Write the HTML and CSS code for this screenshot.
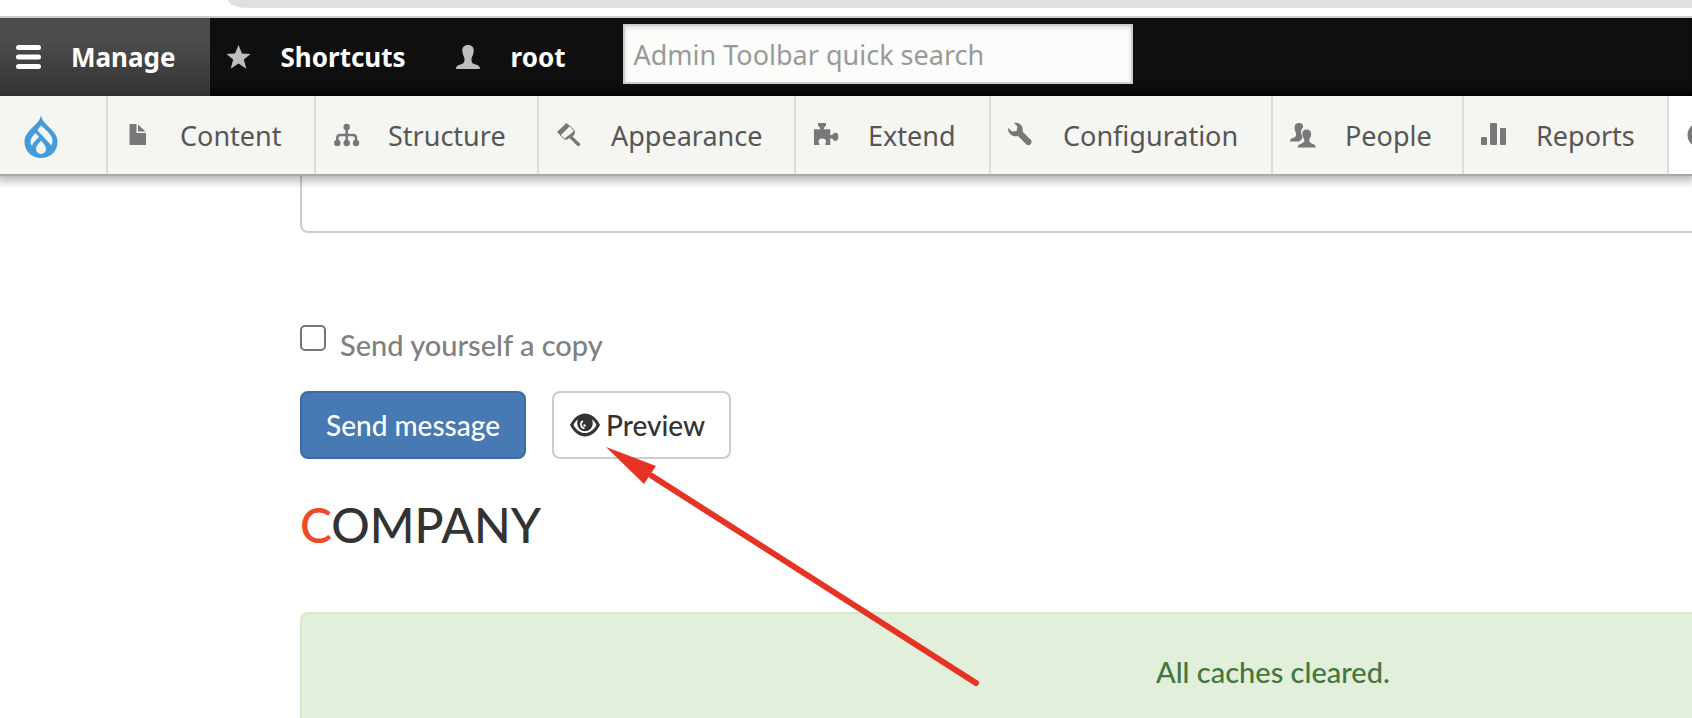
FILE: index.html
```html
<!DOCTYPE html>
<html lang="en">
<head>
<meta charset="utf-8">
<title>Contact</title>
<link rel="stylesheet" href="styles.css">
</head>
<body>
<div class="browser"><div class="address"></div></div>
<header class="toolbar">
  <nav class="bar" aria-label="Administration toolbar">
    <a class="tab active" href="#">
      <svg class="icon" viewBox="0 0 26 26"><path d="M2.500 3.500h20M2.500 13h20M2.500 22.500h20" stroke="#fff" stroke-width="5" stroke-linecap="round"/></svg>
      Manage</a>
    <a class="tab" href="#">
      <svg class="icon light" viewBox="0 0 26 26"><path d="M12.500 1l3.500 8.600 8.500.3-6.700 5.600 2.500 9.300-7.800-5.200-7.800 5.200 2.500-9.300L.5 9.900l8.500-.3z"/></svg>
      Shortcuts</a>
    <a class="tab" href="#">
      <svg class="icon light" viewBox="0 0 26 26"><path d="M12 1c4 0 6 2.500 5.700 6-.2 3-1.200 4.500-1.900 6.500-.5 2-.6 5 1.700 6.200 2.500 1 5.500 1 6.500 4.300.2.700-.2 1-1 1H1c-.8 0-1.200-.3-1-1 1-3.300 4-3.300 6.500-4.300 2.300-1.200 2.200-4.200 1.700-6.200-.7-2-1.700-3.500-1.900-6.500C6 3.500 8 1 12 1z"/></svg>
      root</a>
    <input class="search" type="text" aria-label="Search" placeholder="Admin Toolbar quick search">
  </nav>
  <nav class="tray" aria-label="Administration menu">
    <a class="item home" href="#" aria-label="Home">
      <svg class="drop" viewBox="0 0 34 43"><path fill="#459bd9" d="M17 1.500c1.500 6 5 8.500 9 12.500 5 5 7.500 8.500 7.500 14C33.500 37 26.500 44 17 44S.5 37 .5 28C.5 22.500 3 19 8 14c4-4 7.500-6.500 9-12.500z"/><g fill="#f5f5f2"><path d="M17 11.500c4 3.500 7 6 9 9 3 3.500 3 7.500 1.500 11L14 17c-.8-1 2-4.500 3-5.500z"/><path d="M11.500 19l3.500 4c-3.500 3.500-6 5.500-7 9-3-3.500-1.500-8.500 3.500-13z"/><path d="M17 26.500c2 3 5 5 5 8.500a5 5 0 0 1-10 0c0-3.500 3-5.500 5-8.500z"/></g></svg>
    </a>
    <a class="item" href="#"><svg class="icon" viewBox="0 0 26 26"><path d="M4.500 2h6v9H20v12H4.500c-.6 0-1-.4-1-1V3c0-.6.4-1 1-1zM12 2.500l7.500 7H12z"/></svg>Content</a>
    <a class="item" href="#"><svg class="icon" viewBox="0 0 26 26"><circle cx="12.700" cy="5" r="3.200"/><circle cx="3.300" cy="21" r="3.200"/><circle cx="12.700" cy="21" r="3.200"/><circle cx="22" cy="21" r="3.200"/><path d="M12.700 5v16M3.300 21v-5q0-3 3-3H19q3 0 3 3v5" fill="none" stroke="#787878" stroke-width="2.500"/></svg>Structure</a>
    <a class="item" href="#"><svg class="icon" viewBox="0 0 26 26"><path d="M9.500 1L0 10l3.500 3.500 9.500-9.500z"/><path d="M3 13l4.500 4L18 10l-5.500-6.500" fill="none" stroke="#787878"/><path d="M17.500 8.500v4l-2 2 7.500 7c1 1.500-1 3.500-2.500 2.500l-8-8-2 1.500H7z"/></svg>Appearance</a>
    <a class="item" href="#"><svg class="icon" viewBox="0 0 26 26"><path d="M0 7.300h6V5.500l-2-2V1h8v2.500l-2 2v1.800h6.300V13h2c1-2 2-2.300 3.500-2.300 2 0 2.500 2 2.500 4s-.5 4-2.500 4c-1.500 0-2.500-.3-3.500-2.300h-2V23h-5v-1.500c1.500-1.500 1-5-3-5s-4.500 3.500-3 5V23H0z"/></svg>Extend</a>
    <a class="item" href="#"><svg class="icon" viewBox="0 0 26 26"><path d="M5 1c5-1 10 3 8.500 8.500l8.500 8.500c2 2.500-1.500 7-4.500 4.500L9 14C4 15.500-1.500 11.500-1 6l4 3.500L7.500 9l1-4.500z"/></svg>Configuration</a>
    <a class="item" href="#"><svg class="icon" viewBox="0 0 26 26"><path d="M8 1c3 0 4.500 2 4 4.500-2 2-2.500 4.500-1.500 7 .8 1.500 1 3.500.5 4.500l-3 2.500H-1c-.3-3 3-3.300 5-4.500 1.500-1 1.500-3 .5-5-1.500-4-1.500-9 3.500-9z"/><path d="M15.700 7.500c3.500 0 5 2.500 4.300 6-.3 2-2 3.500-1.800 5 .3 4 5.800 2 6.800 7H6.500c1-5 6.500-3 6.800-7 .2-1.500-1.500-3-1.800-5-.7-3.500.7-6 4.200-6z"/></svg>People</a>
    <a class="item" href="#"><svg class="icon" viewBox="0 0 26 26"><rect x="-1" y="15" width="6" height="8" rx="1"/><rect x="8" y="1" width="7" height="22" rx="1"/><rect x="18" y="6" width="6" height="17" rx="1"/></svg>Reports</a>
    <a class="item help" href="#" aria-label="Help"><svg class="icon" viewBox="0 0 26 26"><circle cx="13" cy="13" r="12.500"/></svg></a>
  </nav>
</header>
<main class="page">
  <textarea class="message" aria-label="Message"></textarea>
  <label class="copy"><input class="check" type="checkbox"><span>Send yourself a copy</span></label>
  <div class="actions">
    <button class="btn primary" type="button">Send message</button>
    <button class="btn preview" type="button"><svg class="eye" viewBox="0 0 30 24"><path fill="#333" d="M0 12C4 4 10 .5 15 .5S26 4 30 12c-4 8-10 11.500-15 11.500S4 20 0 12z"/><path fill="#fff" d="M3.500 12c1.200-2.500 2.500-4.300 4.500-5.500-.7 1.700-.9 3.200-.7 4.700.5 4.200 3.900 7 7.700 7s7.200-2.800 7.700-7c.2-1.500 0-3-.7-4.700 2 1.200 3.300 3 4.500 5.500-3 5.500-7.500 8-11.500 8s-8.500-2.500-11.500-8z"/><path d="M13 8c-2 1.200-2.500 2.800-2 4.500s2 2.700 3.500 2.700" fill="none" stroke="#fff" stroke-width="1.500"/><circle cx="14.500" cy="12.500" r="1.200" fill="#fff"/></svg>Preview</button>
  </div>
  <h2 class="brand"><span class="initial">C</span>OMPANY</h2>
  <div class="alert" role="status">All caches cleared.</div>
</main>
<svg class="arrow" viewBox="0 0 374 240" aria-hidden="true"><path d="M46 29L370 236" stroke="#e73323" stroke-width="6" stroke-linecap="round"/><path fill="#e73323" d="M0 0l50 19-12 18z"/></svg>
</body>
</html>
```
FILE: styles.css
```css
* { box-sizing: border-box; }
body { margin: 0; height: 100vh; overflow: hidden; position: relative; background: #fff; font-family: Lato, sans-serif; font-size: 28px; font-weight: 500; color: #333; }
.browser { height: 18px; border-bottom: 2px solid #ccc; }
.address { height: 8px; margin-left: 228px; background: #e0e0e0; border-bottom-left-radius: 20px 8px; }
.toolbar { position: relative; z-index: 1; font-family: "Noto Sans", sans-serif; font-size: 27px; font-weight: 400; }
.bar { display: flex; height: 78px; background: #0f0f0f; box-shadow: inset 0 -8px 8px -6px #000; }
.tab { display: flex; align-items: center; gap: 29px; padding: 0 34px 0 16px; color: #fff; font-size: 26px; font-weight: 700; text-decoration: none; }
.tab.active { background: linear-gradient(#4c4c4c 30%, #333); }
.icon { width: 26px; height: 26px; flex: none; fill: #787878; overflow: visible; }
.light { fill: #bebebe; }
.search { width: 510px; height: 60px; margin: 6px 0 0 24px; padding: 0 8px; border: 2px solid #ccc; background: #fcfcfa; box-shadow: inset 0 2px 4px #ddd; font: inherit; }
.search::placeholder { color: #999; }
.tray { display: grid; grid-template-columns: 108px 208px 223px 257px 195px 282px 191px 205px 1fr; height: 80px; border-bottom: 2px solid #aaa; background: #f5f5f2; box-shadow: 0 0 10px 4px rgba(0, 0, 0, 0.33); }
.item { display: flex; align-items: center; gap: 28px; padding-left: 18px; border-right: 2px solid #ddd; color: #565656; text-decoration: none; }
.drop { width: 34px; height: 43px; overflow: visible; }
.home { padding-left: 24px; }
.help { background: #fff; border-right: 0; }
.page { width: 115%; margin-left: 300px; }
.message { display: block; width: 100%; height: 80px; margin-top: -23px; border: 2px solid #ccc; border-radius: 8px; resize: none; }
.copy { display: flex; align-items: flex-start; gap: 14px; margin-top: 92px; color: #808080; font-size: 29px; line-height: 40px; }
.check { appearance: none; width: 26px; height: 26px; margin: 0; border: 2px solid #767676; border-radius: 5px; background: #fff; }
.actions { display: flex; gap: 26px; margin-top: 26px; }
.btn { display: flex; align-items: center; gap: 6px; height: 68px; padding: 0 24px; border: 2px solid #ccc; border-radius: 8px; background: #fff; color: #333; font: inherit; }
.primary { background: #4779b3; border-color: #3c6ca7; color: #fff; }
.preview { padding-left: 16px; }
.eye { width: 30px; height: 24px; }
.brand { margin: 36px 0 57px; font-size: 48px; font-weight: 500; line-height: 60px; }
.initial { color: #f04923; }
.alert { padding: 38px 40px 60px; border: 2px solid #d8e8c8; border-radius: 8px; background: #e2efdb; color: #457640; font-size: 29px; text-align: center; line-height: 40px; }
.arrow { position: absolute; left: 606px; top: 447px; width: 374px; height: 240px; z-index: 2; pointer-events: none; }
```
